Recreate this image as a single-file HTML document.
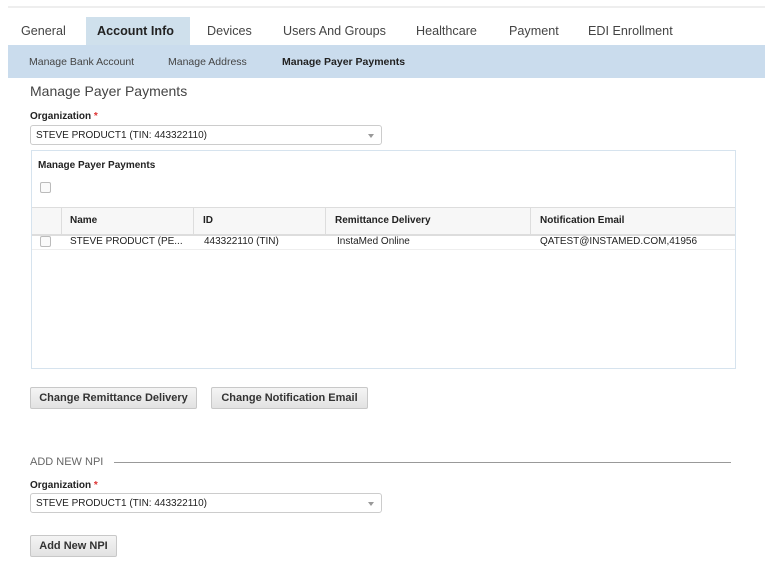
<!DOCTYPE html>
<html><head><style>
body{margin:0;width:771px;height:567px;background:#fff;font-family:"Liberation Sans",sans-serif;position:relative;overflow:hidden;color:#333}
.a{position:absolute;white-space:nowrap}
.tab{font-size:12.6px;color:#444;top:24px}
.sub{font-size:10.5px;color:#444;top:56px}
.lbl{font-size:10px;font-weight:bold;color:#222}
.sel{position:absolute;border:1px solid #ccc;border-radius:3px;background:#fff;font-size:10px;color:#222;box-sizing:border-box;padding:4px 5px}
.sel:after{content:"";position:absolute;right:7px;top:8px;border:3px solid transparent;border-top:4px solid #999}
.btn{position:absolute;background:linear-gradient(#f4f4f4,#e2e2e2);border:1px solid #c8c8c8;border-radius:2px;font-size:11px;font-weight:bold;color:#333;text-align:center;box-sizing:border-box;padding-top:4px}
.cb{position:absolute;width:9px;height:9px;border:1px solid #bbb;border-radius:2px;background:#fafafa}
.th{font-size:10px;font-weight:bold;color:#222;top:215px}
.td{font-size:10px;color:#222;top:236px}
</style></head><body>
<div class="a" style="left:8px;top:6px;width:757px;height:2px;background:#eee"></div>
<div class="a" style="left:86px;top:17px;width:104px;height:28px;background:#cfe0ec"></div>
<div class="a tab" style="left:21px">General</div>
<div class="a tab" style="left:97px;font-weight:bold;color:#222">Account Info</div>
<div class="a tab" style="left:207px">Devices</div>
<div class="a tab" style="left:283px">Users And Groups</div>
<div class="a tab" style="left:416px">Healthcare</div>
<div class="a tab" style="left:509px">Payment</div>
<div class="a tab" style="left:588px">EDI Enrollment</div>
<div class="a" style="left:8px;top:45px;width:757px;height:33px;background:#cadced"></div>
<div class="a sub" style="left:29px">Manage Bank Account</div>
<div class="a sub" style="left:168px">Manage Address</div>
<div class="a sub" style="left:282px;font-weight:bold;color:#222">Manage Payer Payments</div>
<div class="a" style="left:30px;top:83px;font-size:14px;color:#444">Manage Payer Payments</div>
<div class="a lbl" style="left:30px;top:111px">Organization <span style="color:#d33">*</span></div>
<div class="sel" style="left:30px;top:125px;width:352px;height:20px">STEVE PRODUCT1 (TIN: 443322110)</div>
<div class="a" style="left:31px;top:150px;width:703px;height:217px;border:1px solid #d6e3ee"></div>
<div class="a lbl" style="left:38px;top:160px">Manage Payer Payments</div>
<div class="cb" style="left:40px;top:182px"></div>
<div class="a" style="left:32px;top:207px;width:703px;height:26px;background:#f7f7f7;border-top:1px solid #ddd;border-bottom:2px solid #ddd"></div>
<div class="a" style="left:61px;top:208px;width:1px;height:26px;background:#ddd"></div>
<div class="a" style="left:193px;top:208px;width:1px;height:26px;background:#ddd"></div>
<div class="a" style="left:325px;top:208px;width:1px;height:26px;background:#ddd"></div>
<div class="a" style="left:530px;top:208px;width:1px;height:26px;background:#ddd"></div>
<div class="a th" style="left:70px">Name</div>
<div class="a th" style="left:203px">ID</div>
<div class="a th" style="left:335px">Remittance Delivery</div>
<div class="a th" style="left:540px">Notification Email</div>
<div class="cb" style="left:40px;top:236px"></div>
<div class="a td" style="left:70px">STEVE PRODUCT (PE...</div>
<div class="a td" style="left:204px">443322110 (TIN)</div>
<div class="a td" style="left:337px">InstaMed Online</div>
<div class="a td" style="left:540px">QATEST@INSTAMED.COM,41956</div>
<div class="a" style="left:32px;top:249px;width:703px;height:1px;background:#eee"></div>
<div class="btn" style="left:30px;top:387px;width:167px;height:22px">Change Remittance Delivery</div>
<div class="btn" style="left:211px;top:387px;width:157px;height:22px">Change Notification Email</div>
<div class="a" style="left:30px;top:456px;font-size:11px;color:#666">ADD NEW NPI</div>
<div class="a" style="left:114px;top:462px;width:617px;height:1px;background:#999"></div>
<div class="a lbl" style="left:30px;top:480px">Organization <span style="color:#d33">*</span></div>
<div class="sel" style="left:30px;top:493px;width:352px;height:20px">STEVE PRODUCT1 (TIN: 443322110)</div>
<div class="btn" style="left:30px;top:535px;width:87px;height:22px">Add New NPI</div>
</body></html>
